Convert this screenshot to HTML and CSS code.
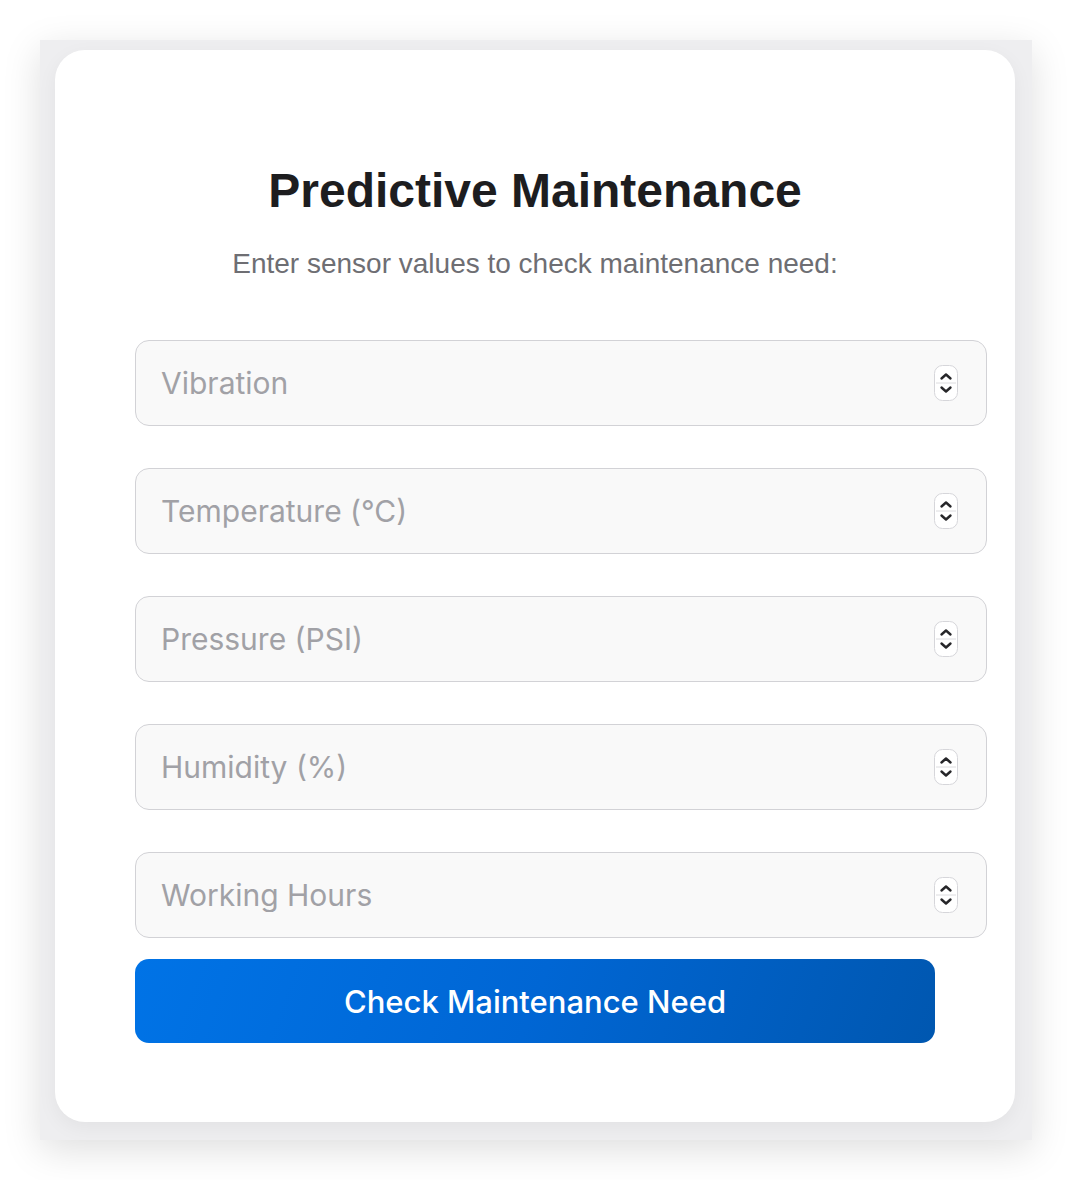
FILE: index.html
```
<!DOCTYPE html>
<html>
    <head>
        <title>Predictive Maintenance</title>
        <link rel="stylesheet" href="styles.css">
    </head>
    <body>
        <div class="window">
            <div class="card">
                <h1 class="title">Predictive Maintenance</h1>
                <p class="subtitle">Enter sensor values to check maintenance need:</p>
                <form class="sensor-form">
                    <div class="fields">
                        <div class="field">
                            <input type="text" placeholder="Vibration">
                            <svg class="spin" width="24" height="36" viewBox="0 0 24 36"><rect x="0.5" y="0.5" width="23" height="35" rx="8" fill="#fff" stroke="#d6d6da"/><line x1="2" y1="18" x2="22" y2="18" stroke="#dcdcdf"/><polyline points="7.5,13.5 12,9.5 16.5,13.5" fill="none" stroke="#262629" stroke-width="2.4" stroke-linecap="round" stroke-linejoin="round"/><polyline points="7.5,22.5 12,26.5 16.5,22.5" fill="none" stroke="#262629" stroke-width="2.4" stroke-linecap="round" stroke-linejoin="round"/></svg>
                        </div>
                        <div class="field">
                            <input type="text" placeholder="Temperature (°C)">
                            <svg class="spin" width="24" height="36" viewBox="0 0 24 36"><rect x="0.5" y="0.5" width="23" height="35" rx="8" fill="#fff" stroke="#d6d6da"/><line x1="2" y1="18" x2="22" y2="18" stroke="#dcdcdf"/><polyline points="7.5,13.5 12,9.5 16.5,13.5" fill="none" stroke="#262629" stroke-width="2.4" stroke-linecap="round" stroke-linejoin="round"/><polyline points="7.5,22.5 12,26.5 16.5,22.5" fill="none" stroke="#262629" stroke-width="2.4" stroke-linecap="round" stroke-linejoin="round"/></svg>
                        </div>
                        <div class="field">
                            <input type="text" placeholder="Pressure (PSI)">
                            <svg class="spin" width="24" height="36" viewBox="0 0 24 36"><rect x="0.5" y="0.5" width="23" height="35" rx="8" fill="#fff" stroke="#d6d6da"/><line x1="2" y1="18" x2="22" y2="18" stroke="#dcdcdf"/><polyline points="7.5,13.5 12,9.5 16.5,13.5" fill="none" stroke="#262629" stroke-width="2.4" stroke-linecap="round" stroke-linejoin="round"/><polyline points="7.5,22.5 12,26.5 16.5,22.5" fill="none" stroke="#262629" stroke-width="2.4" stroke-linecap="round" stroke-linejoin="round"/></svg>
                        </div>
                        <div class="field">
                            <input type="text" placeholder="Humidity (%)">
                            <svg class="spin" width="24" height="36" viewBox="0 0 24 36"><rect x="0.5" y="0.5" width="23" height="35" rx="8" fill="#fff" stroke="#d6d6da"/><line x1="2" y1="18" x2="22" y2="18" stroke="#dcdcdf"/><polyline points="7.5,13.5 12,9.5 16.5,13.5" fill="none" stroke="#262629" stroke-width="2.4" stroke-linecap="round" stroke-linejoin="round"/><polyline points="7.5,22.5 12,26.5 16.5,22.5" fill="none" stroke="#262629" stroke-width="2.4" stroke-linecap="round" stroke-linejoin="round"/></svg>
                        </div>
                        <div class="field">
                            <input type="text" placeholder="Working Hours">
                            <svg class="spin" width="24" height="36" viewBox="0 0 24 36"><rect x="0.5" y="0.5" width="23" height="35" rx="8" fill="#fff" stroke="#d6d6da"/><line x1="2" y1="18" x2="22" y2="18" stroke="#dcdcdf"/><polyline points="7.5,13.5 12,9.5 16.5,13.5" fill="none" stroke="#262629" stroke-width="2.4" stroke-linecap="round" stroke-linejoin="round"/><polyline points="7.5,22.5 12,26.5 16.5,22.5" fill="none" stroke="#262629" stroke-width="2.4" stroke-linecap="round" stroke-linejoin="round"/></svg>
                        </div>
                    </div>
                    <button type="button" class="check-btn">Check Maintenance Need</button>
                </form>
            </div>
        </div>
    </body>
</html>
```

FILE: styles.css
```
body{
    margin: 0;
    padding: 40px;
    background: #ffffff;
}
.window{
    width: 992px;
    height: 1100px;
    box-sizing: border-box;
    padding: 10px 17px 18px 15px;
    background: #eeeef0;
    box-shadow: rgba(0, 0, 0, 0.13) 0px 10px 36px;
}
.card{
    width: 960px;
    box-sizing: border-box;
    padding: 80px 80px 79px;
    background: #ffffff;
    border-radius: 30px;
    box-shadow: rgba(0, 0, 0, 0.05) 0px 6px 20px;
}
.title{
    margin: 33px 0 0;
    text-align: center;
    font-family: "Liberation Sans", Arial, sans-serif;
    font-size: 48px;
    line-height: 56px;
    font-weight: bold;
    color: #1d1d1f;
}
.subtitle{
    margin: 29px 0 60px;
    text-align: center;
    font-family: "Liberation Sans", Arial, sans-serif;
    font-size: 28px;
    line-height: 32px;
    color: #6e6e73;
}
.fields{
    display: flex;
    flex-direction: column;
    gap: 42px;
    width: 852px;
}
.field{
    display: flex;
    align-items: center;
    padding: 24px 28px 24px 25px;
    border: 1px solid #d2d2d6;
    border-radius: 14px;
    background: #f9f9f9;
}
.field input{
    flex: 1;
    min-width: 0;
    padding: 0;
    border: 0;
    outline: none;
    background: transparent;
    font-family: Inter, "Noto Sans", sans-serif;
    font-size: 30px;
    line-height: 34px;
    height: 34px;
    color: #1d1d1f;
}
.field input::placeholder{
    color: #a1a1a6;
}
.spin{
    display: block;
    flex: none;
}
.check-btn{
    display: block;
    width: 800px;
    height: 84px;
    margin-top: 21px;
    border: 0;
    border-radius: 14px;
    background: linear-gradient(110deg, #0073e6 0%, #0066d4 50%, #0057b0 100%);
    color: #ffffff;
    font-family: Inter, "Noto Sans", sans-serif;
    font-size: 31px;
    font-weight: 500;
}
```
